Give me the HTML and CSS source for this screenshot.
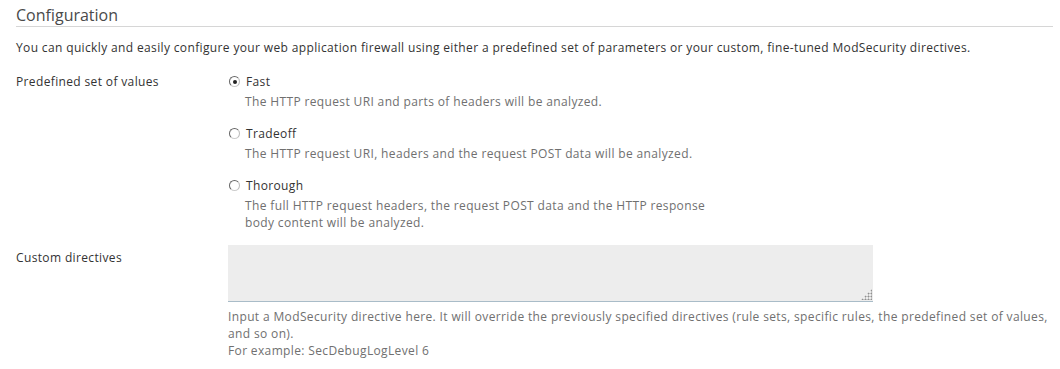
FILE: index.html
```html
<!DOCTYPE html>
<html>
<head>
<meta charset="utf-8">
<link rel="stylesheet" href="styles.css">
</head>
<body>
<div class="page">
  <h2 class="section-title">Configuration</h2>
  <p class="intro">You can quickly and easily configure your web application firewall using either a predefined set of parameters or your custom, fine-tuned ModSecurity directives.</p>
  <div class="form-row">
    <div class="label">Predefined set of values</div>
    <div class="field">
      <div class="option">
        <div class="option-head"><span class="radio checked"></span><span>Fast</span></div>
        <div class="hint">The HTTP request URI and parts of headers will be analyzed.</div>
      </div>
      <div class="option">
        <div class="option-head"><span class="radio"></span><span>Tradeoff</span></div>
        <div class="hint">The HTTP request URI, headers and the request POST data will be analyzed.</div>
      </div>
      <div class="option">
        <div class="option-head"><span class="radio"></span><span>Thorough</span></div>
        <div class="hint narrow">The full HTTP request headers, the request POST data and the HTTP response body content will be analyzed.</div>
      </div>
    </div>
  </div>
  <div class="form-row">
    <div class="label label-ta">Custom directives</div>
    <div class="field">
      <div class="textarea"><span class="grip"></span></div>
      <div class="hint help">Input a ModSecurity directive here. It will override the previously specified directives (rule sets, specific rules, the predefined set of values, and so on).<br>For example: SecDebugLogLevel 6</div>
    </div>
  </div>
</div>
</body>
</html>
```
FILE: styles.css
```css
html, body { margin: 0; padding: 0; background: #fff; }
body {
  font-family: "Open Sans", "Liberation Sans", sans-serif;
  font-size: 12px;
  letter-spacing: 0.36px;
  color: #333;
}
.page { padding: 4px 4px 0 16px; }
.section-title {
  margin: 0 3px 0 0;
  font-size: 16px;
  font-weight: normal;
  letter-spacing: 0;
  color: #4a4a4a;
  line-height: 22px;
  border-bottom: 1px solid #d6d6d6;
  padding-bottom: 0;
}
.intro { margin: 12px 0 0 0; line-height: 17px; }
.form-row { display: grid; grid-template-columns: 212px 1fr; margin-top: 16px; }
.form-row + .form-row { margin-top: 14px; }
.label { line-height: 17px; padding-top: 1px; }
.label-ta { padding-top: 4px; }
.option { margin-bottom: 14px; }
.option:last-child { margin-bottom: 0; }
.option-head { display: flex; align-items: center; line-height: 17px; padding-top: 1px; }
.radio {
  width: 9px; height: 9px; border-radius: 50%;
  border: 1px solid #666;
  border-right-color: #bbb; border-bottom-color: #ccc;
  background: #fff;
  margin: 0 6px 0 1px;
  position: relative;
  box-sizing: content-box;
}
.radio.checked::after {
  content: ""; position: absolute; left: 2.5px; top: 2.5px;
  width: 4px; height: 4px; border-radius: 50%; background: #222;
}
.hint { color: #707070; line-height: 17px; padding-left: 17px; margin-top: 3px; }
.hint.narrow { max-width: 470px; }
.textarea {
  width: 645px; height: 56px;
  background: #ededed;
  border-bottom: 1px solid #a9bcc8;
  position: relative;
}
.grip {
  position: absolute; right: 1px; bottom: 1px; width: 11px; height: 11px;
  background-image: radial-gradient(circle, #909090 0.9px, transparent 1.1px);
  background-size: 3px 3px;
  clip-path: polygon(100% 0, 100% 100%, 0 100%);
}
.help { padding-left: 0; margin-top: 6px; }
```
